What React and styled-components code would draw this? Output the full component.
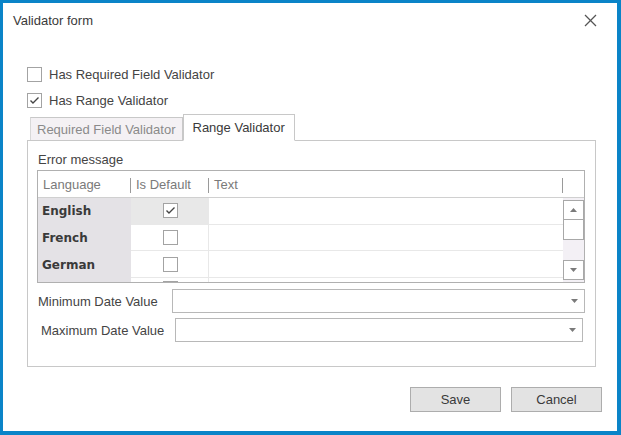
import React from "react";
import styled, { createGlobalStyle } from "styled-components";

const GlobalStyle = createGlobalStyle`
	html, body {
		margin: 0;
		padding: 0;
		background: #ffffff;
	}
	body {
		font-family: "Liberation Sans", Arial, sans-serif;
		font-size: 13px;
		color: #444444;
	}
`;

const languages = [
	{ name: "English", isDefault: true, selected: true },
	{ name: "French", isDefault: false },
	{ name: "German", isDefault: false },
	{ name: "", isDefault: false, partial: true },
];

//============
// icons
//============
const CheckMark = () => (
	<svg width="11" height="9" viewBox="0 0 11 9">
		<polyline
			points="1.5,4.5 4,7 9.5,1.5"
			fill="none"
			stroke="#444"
			strokeWidth="1.4"
		/>
	</svg>
);

const CloseIcon = () => (
	<svg width="13" height="13" viewBox="0 0 13 13">
		<line x1="1" y1="1" x2="12" y2="12" stroke="#555" strokeWidth="1.3" />
		<line x1="12" y1="1" x2="1" y2="12" stroke="#555" strokeWidth="1.3" />
	</svg>
);

const Triangle = ({ up }) => (
	<svg width="7" height="4" viewBox="0 0 7 4">
		<polygon
			points={up ? "0,4 7,4 3.5,0" : "0,0 7,0 3.5,4"}
			fill="#7a7a7a"
		/>
	</svg>
);

//============
// parts
//============
const CheckBox = ({ checked }) => (
	<StyledCheck>{checked && <CheckMark />}</StyledCheck>
);

const ValidatorGrid = () => (
	<Grid>
		<HeaderRow>
			<HeaderCell $sep>Language</HeaderCell>
			<HeaderCell $sep>Is Default</HeaderCell>
			<HeaderCell $sep>Text</HeaderCell>
			<HeaderCell />
		</HeaderRow>
		<GridBody>
			<Rows>
				{languages.map((e, i) => (
					<Row key={i}>
						<LangCell>{e.name}</LangCell>
						<DefaultCell $selected={e.selected} $partial={e.partial}>
							<CheckBox checked={e.isDefault} />
						</DefaultCell>
						<TextCell />
					</Row>
				))}
			</Rows>
			<ScrollBar>
				<ScrollButton>
					<Triangle up />
				</ScrollButton>
				<ScrollThumb />
				<ScrollTrack />
				<ScrollButton>
					<Triangle />
				</ScrollButton>
			</ScrollBar>
		</GridBody>
	</Grid>
);

const App = () => {
	return (
		<>
			<GlobalStyle />
			<Frame>
				<TitleBar>
					<Title>Validator form</Title>
					<CloseButton>
						<CloseIcon />
					</CloseButton>
				</TitleBar>
				<Content>
					<CheckRow>
						<CheckBox />
						<span>Has Required Field Validator</span>
					</CheckRow>
					<CheckRow>
						<CheckBox checked />
						<span>Has Range Validator</span>
					</CheckRow>
					<TabStrip>
						<Tab $pad={6}>Required Field Validator</Tab>
						<Tab $active $pad={9}>
							Range Validator
						</Tab>
					</TabStrip>
					<TabPanel>
						<GroupLabel>Error message</GroupLabel>
						<ValidatorGrid />
						<FieldRow>
							<FieldLabel>Minimum Date Value</FieldLabel>
							<ComboBox>
								<Triangle />
							</ComboBox>
						</FieldRow>
						<FieldRow $shift={3}>
							<FieldLabel>Maximum Date Value</FieldLabel>
							<ComboBox>
								<Triangle />
							</ComboBox>
						</FieldRow>
					</TabPanel>
				</Content>
				<Footer>
					<Button>Save</Button>
					<Button>Cancel</Button>
				</Footer>
			</Frame>
		</>
	);
};

export default App;

//============
// styles
//============
const Frame = styled.div`
	width: 621px;
	height: 435px;
	box-sizing: border-box;
	border-style: solid;
	border-color: #0a84c8;
	border-width: 3px 4px 4px 3px;
	background: #ffffff;
	display: flex;
	flex-direction: column;
`;

const TitleBar = styled.div`
	height: 34px;
	display: flex;
	align-items: center;
	justify-content: space-between;
	padding: 0 20px 0 10px;
`;

const Title = styled.div`
	color: #3a3a3a;
	font-size: 13px;
`;

const CloseButton = styled.div`
	display: flex;
	align-items: center;
	margin-top: 1px;
`;

const Content = styled.div`
	padding: 30px 21px 0 24px;
	display: flex;
	flex-direction: column;
`;

const CheckRow = styled.label`
	display: flex;
	align-items: center;
	gap: 7px;
	height: 15px;
	margin-bottom: 11px;
	&:nth-of-type(2) {
		margin-bottom: 6px;
	}
`;

const StyledCheck = styled.span`
	width: 15px;
	height: 15px;
	box-sizing: border-box;
	border: 1px solid #a3a3a3;
	background: #fff;
	display: inline-flex;
	align-items: center;
	justify-content: center;
	flex-shrink: 0;
`;

const TabStrip = styled.div`
	display: flex;
	align-items: flex-end;
	height: 26px;
	padding-left: 3px;
	position: relative;
	z-index: 1;
`;

const Tab = styled.div`
	height: ${(p) => (p.$active ? "27px" : "23px")};
	box-sizing: border-box;
	padding: 0 ${(p) => p.$pad}px;
	display: flex;
	align-items: center;
	border: 1px solid #c8c8c8;
	border-bottom: ${(p) => (p.$active ? "1px solid #fff" : "none")};
	border-left: ${(p) => (p.$active ? "1px solid #c8c8c8" : "1px solid #d8d8d8")};
	background: ${(p) => (p.$active ? "#ffffff" : "#f4f1f4")};
	color: ${(p) => (p.$active ? "#3a3a3a" : "#8a8a8a")};
	margin-bottom: ${(p) => (p.$active ? "-1px" : "0")};
	padding-top: ${(p) => (p.$active ? "0" : "1px")};
`;

const TabPanel = styled.div`
	height: 227px;
	box-sizing: border-box;
	border: 1px solid #c8c8c8;
	padding: 11px 10px 0 9px;
	display: flex;
	flex-direction: column;
`;

const GroupLabel = styled.div`
	padding-left: 1px;
	line-height: 16px;
	margin-bottom: 2px;
`;

const Grid = styled.div`
	height: 113px;
	box-sizing: border-box;
	border: 1px solid #b0b0b0;
	display: flex;
	flex-direction: column;
	overflow: hidden;
`;

const HeaderRow = styled.div`
	height: 26px;
	flex-shrink: 0;
	display: grid;
	grid-template-columns: 93px 78px 354px 21px;
	border-bottom: 1px solid #d0d0d0;
`;

const HeaderCell = styled.div`
	display: flex;
	align-items: center;
	padding-left: 5px;
	color: #7a7a7a;
	position: relative;
	&::after {
		content: "";
		display: ${(p) => (p.$sep ? "block" : "none")};
		position: absolute;
		right: 0;
		top: 7px;
		bottom: 4px;
		width: 1px;
		background: #9a9a9a;
	}
`;

const GridBody = styled.div`
	flex: 1;
	display: flex;
	overflow: hidden;
`;

const Rows = styled.div`
	width: 525px;
	display: flex;
	flex-direction: column;
	overflow: hidden;
`;

const Row = styled.div`
	height: 26.7px;
	flex-shrink: 0;
	box-sizing: border-box;
	display: grid;
	grid-template-columns: 93px 78px 354px;
	border-bottom: 1px solid #e8e8e8;
`;

const LangCell = styled.div`
	background: #e4e2e6;
	display: flex;
	align-items: center;
	padding-left: 4px;
	font-family: "DejaVu Sans", Verdana, sans-serif;
	font-weight: bold;
	font-size: 12px;
	color: #3a3a3a;
	margin-bottom: -1px;
`;

const DefaultCell = styled.div`
	background: ${(p) => (p.$selected ? "#e8e8e8" : "#ffffff")};
	display: flex;
	align-items: ${(p) => (p.$partial ? "flex-start" : "center")};
	padding-top: ${(p) => (p.$partial ? "3px" : "0")};
	justify-content: center;
	border-right: 1px solid #e8e8e8;
	padding-left: 1px;
`;

const TextCell = styled.div`
	background: #fff;
`;

const ScrollBar = styled.div`
	width: 21px;
	display: flex;
	flex-direction: column;
	background: #f3f0f5;
	padding-top: 2px;
	box-sizing: border-box;
`;

const ScrollButton = styled.div`
	height: 20px;
	box-sizing: border-box;
	border: 1px solid #a8a8a8;
	background: #fff;
	display: flex;
	align-items: center;
	justify-content: center;
`;

const ScrollThumb = styled.div`
	height: 20px;
	box-sizing: border-box;
	border: 1px solid #a8a8a8;
	border-top: none;
	background: #fff;
`;

const ScrollTrack = styled.div`
	height: 20px;
`;

const FieldRow = styled.div`
	display: flex;
	align-items: center;
	margin-top: ${(p) => (p.$shift ? "5px" : "6px")};
	padding-left: ${(p) => (p.$shift || 0) + 1}px;
	padding-right: ${(p) => (p.$shift ? 2 : 0)}px;
`;

const FieldLabel = styled.div`
	width: 134px;
	flex-shrink: 0;
`;

const ComboBox = styled.div`
	flex: 1;
	height: 24px;
	box-sizing: border-box;
	border: 1px solid #b8b8b8;
	background: #fff;
	display: flex;
	align-items: center;
	justify-content: flex-end;
	padding-right: 6px;
`;

const Footer = styled.div`
	display: flex;
	justify-content: flex-end;
	gap: 10px;
	padding: 20px 15px 0 0;
`;

const Button = styled.button`
	width: 91px;
	height: 25px;
	box-sizing: border-box;
	border: 1px solid #adadad;
	background: #e3e3e3;
	font-family: "Liberation Sans", Arial, sans-serif;
	font-size: 13px;
	color: #3a3a3a;
	padding: 0;
`;
